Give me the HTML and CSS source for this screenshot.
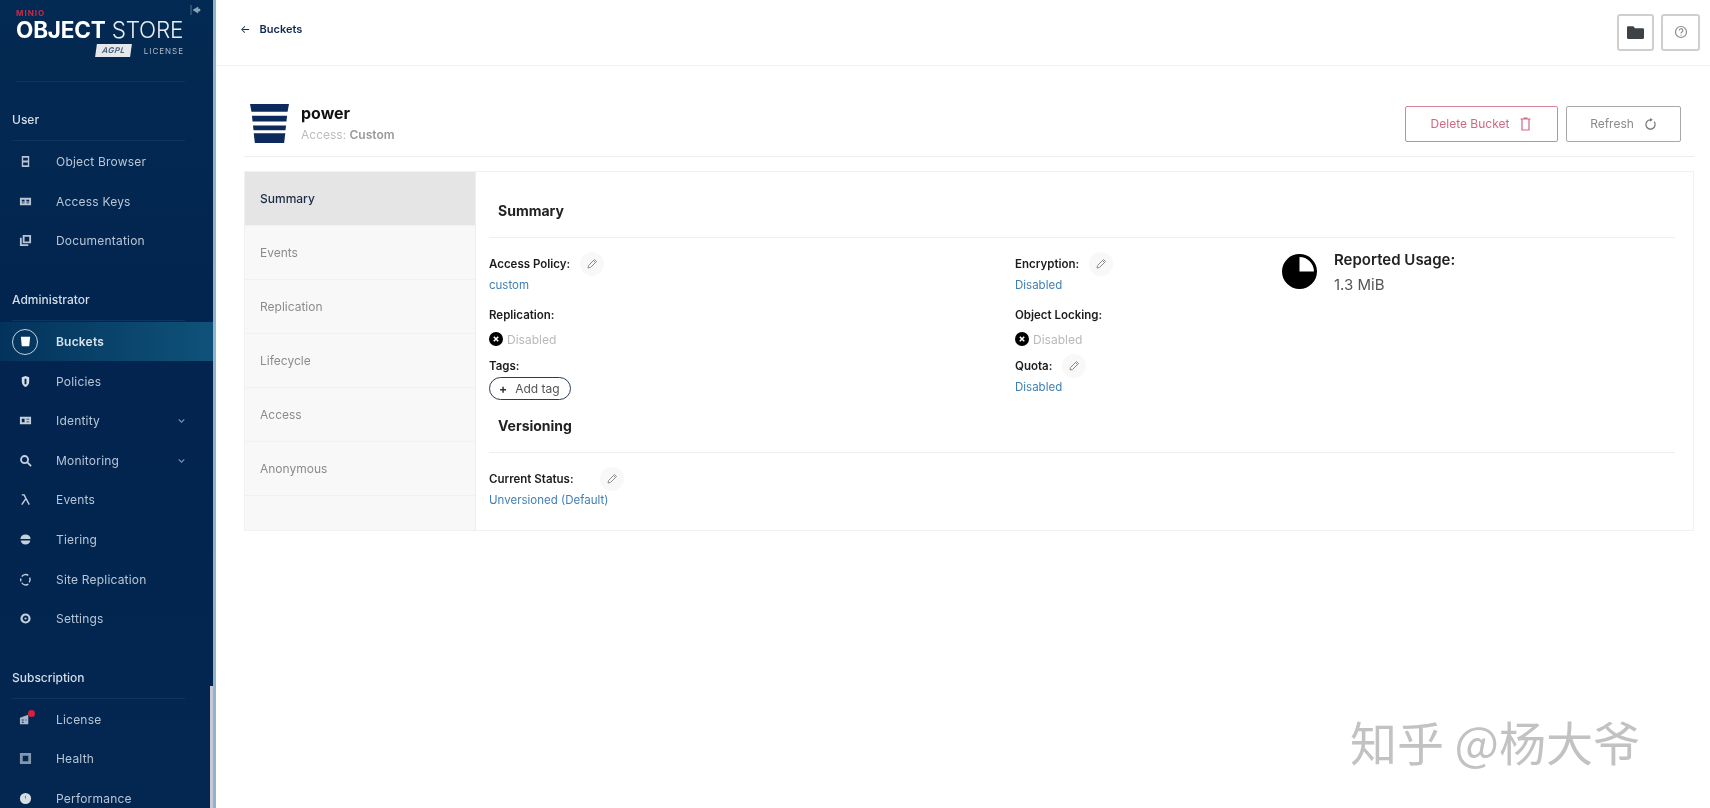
FILE: index.html
```html
<!DOCTYPE html>
<html lang="en">
<head>
<meta charset="utf-8">
<title>MinIO Object Store - power</title>
<link rel="stylesheet" href="styles.css">
</head>
<body>
<div class="app">
  <aside class="sidebar">
    <div class="brand">
      <svg class="collapse" viewBox="0 0 12 12"><path d="M2 1v10M4 6l5-3v2h2v2H9v2z" fill="#8fa3b8" stroke="#8fa3b8" stroke-width=".6"/></svg>
      <div class="brand-min">MINIO</div>
      <div class="brand-name"><b>OBJECT</b> STORE</div>
      <div class="brand-lic"><span class="agpl">AGPL</span><span>LICENSE</span></div>
    </div>
    <div class="brand-rule"></div>

    <div class="group-title first">User</div>
    <nav class="group">
      <a class="item"><svg class="ico" viewBox="0 0 14 14"><path d="M3 1h8v12H3zM4.5 3v3h5V3zM4.5 8v3h5V8z" fill="#b6c4d4" fill-rule="evenodd"/></svg><span>Object Browser</span></a>
      <a class="item"><svg class="ico" viewBox="0 0 14 14"><path d="M1 3h12v8H1zM3 5v2h3V5zM8 5v2h3V5zM3 8v1h3V8zM8 8v1h3V8z" fill="#b6c4d4" fill-rule="evenodd"/></svg><span>Access Keys</span></a>
      <a class="item"><svg class="ico" viewBox="0 0 14 14"><path d="M4 1h9v9H4zM1 4h2v7h7v2H1zM6 3v5h5V3z" fill="#b6c4d4" fill-rule="evenodd"/></svg><span>Documentation</span></a>
    </nav>

    <div class="group-title">Administrator</div>
    <nav class="group">
      <a class="item active"><span class="ring"><svg viewBox="0 0 14 14"><path d="M2 2h10l-1 10H3z" fill="#fff"/></svg></span><span>Buckets</span></a>
      <a class="item"><svg class="ico" viewBox="0 0 14 14"><path d="M7 1l4 1.5V7c0 3-2 5-4 6-2-1-4-3-4-6V2.500zM6 4v6h2V4z" fill="#d5dde6" fill-rule="evenodd"/></svg><span>Policies</span></a>
      <a class="item"><svg class="ico" viewBox="0 0 14 14"><path d="M1 3h12v8H1zM3 5v4h3V5zM8 5v1h3V5zM8 8v1h3V8z" fill="#c4d0dc" fill-rule="evenodd"/></svg><span>Identity</span><svg class="chev" viewBox="0 0 8 8"><path d="M1.500 3L4 5.500 6.500 3" fill="none" stroke="#7f95ac" stroke-width="1"/></svg></a>
      <a class="item"><svg class="ico" viewBox="0 0 14 14"><circle cx="6" cy="6" r="3.800" fill="none" stroke="#c4d0dc" stroke-width="2"/><path d="M9 9l4 4" stroke="#c4d0dc" stroke-width="2"/></svg><span>Monitoring</span><svg class="chev" viewBox="0 0 8 8"><path d="M1.500 3L4 5.500 6.500 3" fill="none" stroke="#7f95ac" stroke-width="1"/></svg></a>
      <a class="item"><svg class="ico" viewBox="0 0 14 14"><path d="M3 2h2.500L11 12.500M7 6.500L3 12.500" fill="none" stroke="#c4d0dc" stroke-width="1.500"/></svg><span>Events</span></a>
      <a class="item"><svg class="ico" viewBox="0 0 14 14"><path d="M7 1.500a5.500 5.500 0 0 1 5.500 5H1.500a5.500 5.500 0 0 1 5.500-5zM1.800 8h10.400A5.500 5.500 0 0 1 7 12.500 5.500 5.500 0 0 1 1.800 8z" fill="#c4d0dc"/></svg><span>Tiering</span></a>
      <a class="item"><svg class="ico" viewBox="0 0 14 14"><path d="M3 4a5 5 0 0 1 7-1.500M11.500 5a5 5 0 0 1-.5 5M10 12a5 5 0 0 1-7-1.500M2 9a5 5 0 0 1 0-3" fill="none" stroke="#c4d0dc" stroke-width="1.500"/></svg><span>Site Replication</span></a>
      <a class="item"><svg class="ico" viewBox="0 0 14 14"><circle cx="7" cy="7" r="4.300" fill="none" stroke="#c4d0dc" stroke-width="2.400"/><circle cx="7" cy="7" r="1.200" fill="#c4d0dc"/></svg><span>Settings</span></a>
    </nav>

    <div class="group-title">Subscription</div>
    <nav class="group">
      <a class="item"><span class="badged"><svg class="ico" viewBox="0 0 14 14"><path d="M1 5l9-3v10H1zM3 7v1h2V7zM3 9.500v1h2v-1zM7 7v1h1V7z" fill="#a9b9ca" fill-rule="evenodd"/></svg><i class="dot"></i></span><span>License</span></a>
      <a class="item"><svg class="ico" viewBox="0 0 14 14"><path d="M1 1h12v12H1zM4 4v6h6V4z" fill="#8296ad" fill-rule="evenodd"/></svg><span>Health</span></a>
      <a class="item"><svg class="ico" viewBox="0 0 14 14"><circle cx="7" cy="7" r="6" fill="#d5dde6"/><path d="M7 4v3" stroke="#5f7690" stroke-width="1"/></svg><span>Performance</span></a>
    </nav>
    <div class="rail-end"></div>
  </aside>

  <main class="main">
    <header class="topbar">
      <a class="back"><span class="arrow">←</span><span>Buckets</span></a>
      <div class="top-actions">
        <button class="square wide"><svg viewBox="0 0 16 14"><path d="M0 2a1 1 0 0 1 1-1h5l1.500 2H15a1 1 0 0 1 1 1v8a1 1 0 0 1-1 1H1a1 1 0 0 1-1-1z" fill="#3d4247"/></svg></button>
        <button class="square"><svg viewBox="0 0 14 14"><circle cx="7" cy="7" r="5.500" fill="none" stroke="#8b8b8b" stroke-width="1.200"/><path d="M5.300 5.500a1.800 1.800 0 1 1 2.600 1.600c-.6.300-.9.700-.9 1.400M7 9.800v1" fill="none" stroke="#8b8b8b" stroke-width="1.100"/></svg></button>
      </div>
    </header>

    <section class="page">
      <div class="bucket-head">
        <svg class="bucket-ico" viewBox="0 0 40 40"><path d="M0 0h40l-1.500 8H1.500z" fill="#0d2a5c"/><path d="M1.500 8h37v4H1.500z" fill="#fff" opacity="0"/><path d="M2 12h36l-.6 6H2.600z" fill="#0d2a5c"/><path d="M3 22h34l-.6 5H3.600z" fill="#0d2a5c"/><path d="M3.800 30h32.400L35 40H5z" fill="#0d2a5c"/></svg>
        <div class="bucket-info">
          <h1 class="bucket-name">power</h1>
          <div class="bucket-access">Access: <b>Custom</b></div>
        </div>
        <div class="head-actions">
          <button class="btn danger">Delete Bucket<svg viewBox="0 0 12 14"><path d="M1 2h10M2.500 2v11h7V2M4 1h4" fill="none" stroke="#cf6a82" stroke-width="1.200"/></svg></button>
          <button class="btn plain">Refresh<svg viewBox="0 0 14 14"><path d="M11 4.500A5 5 0 1 1 7 2.500" fill="none" stroke="#777" stroke-width="1.400"/><path d="M6.500 .5v4l3-2z" fill="#777"/></svg></button>
        </div>
      </div>

      <div class="panel">
        <ul class="tabs">
          <li class="tab current">Summary</li>
          <li class="tab">Events</li>
          <li class="tab">Replication</li>
          <li class="tab">Lifecycle</li>
          <li class="tab">Access</li>
          <li class="tab">Anonymous</li>
        </ul>
        <div class="content">
          <h2 class="section-title">Summary</h2>
          <div class="summary">
            <div class="col one">
              <div class="field">
                <div class="label">Access Policy:<span class="edit"><svg viewBox="0 0 12 12"><path d="M2 10l.6-2.600L8.500 1.500l2 2-5.900 5.900zM7.500 2.500l2 2" fill="none" stroke="#8d8d8d" stroke-width="1"/></svg></span></div>
                <div class="value">custom</div>
              </div>
              <div class="field">
                <div class="label">Replication:</div>
                <div class="status"><svg viewBox="0 0 14 14"><circle cx="7" cy="7" r="7" fill="#000"/><path d="M4.800 4.800l4.400 4.400M9.200 4.800L4.800 9.200" stroke="#fff" stroke-width="1.600"/></svg>Disabled</div>
              </div>
              <div class="field">
                <div class="label">Tags:</div>
                <div class="pill"><span class="plus">+</span>Add tag</div>
              </div>
            </div>
            <div class="col two">
              <div class="field">
                <div class="label">Encryption:<span class="edit"><svg viewBox="0 0 12 12"><path d="M2 10l.6-2.600L8.500 1.500l2 2-5.900 5.900zM7.500 2.500l2 2" fill="none" stroke="#8d8d8d" stroke-width="1"/></svg></span></div>
                <div class="value">Disabled</div>
              </div>
              <div class="field">
                <div class="label">Object Locking:</div>
                <div class="status"><svg viewBox="0 0 14 14"><circle cx="7" cy="7" r="7" fill="#000"/><path d="M4.800 4.800l4.400 4.400M9.200 4.800L4.800 9.200" stroke="#fff" stroke-width="1.600"/></svg>Disabled</div>
              </div>
              <div class="field">
                <div class="label">Quota:<span class="edit"><svg viewBox="0 0 12 12"><path d="M2 10l.6-2.600L8.500 1.500l2 2-5.900 5.900zM7.500 2.500l2 2" fill="none" stroke="#8d8d8d" stroke-width="1"/></svg></span></div>
                <div class="value">Disabled</div>
              </div>
            </div>
            <div class="usage">
              <svg viewBox="0 0 34 34"><path fill-rule="evenodd" d="M17 0a17 17 0 1 1 0 34 17 17 0 0 1 0-34zM17 3v14h14A14 14 0 0 0 17 3z" fill="#000"/></svg>
              <div>
                <div class="usage-title">Reported Usage:</div>
                <div class="usage-value">1.3 MiB</div>
              </div>
            </div>
          </div>
          <h2 class="section-title versioning">Versioning</h2>
          <div class="field status-field">
            <div class="label">Current Status:<span class="edit far"><svg viewBox="0 0 12 12"><path d="M2 10l.6-2.600L8.500 1.500l2 2-5.900 5.900zM7.500 2.500l2 2" fill="none" stroke="#8d8d8d" stroke-width="1"/></svg></span></div>
            <div class="value">Unversioned (Default)</div>
          </div>
        </div>
      </div>
    </section>
  </main>
</div>
<div class="watermark">知乎 @杨大爷</div>
</body>
</html>
```

FILE: styles.css
```css
* { box-sizing: border-box; }
html, body { margin: 0; height: 100%; overflow: hidden; background: #fff; }
body { font-family: Inter, "Liberation Sans", sans-serif; color: #000; filter: blur(.55px); }
h1, h2, ul { margin: 0; padding: 0; }
button { font-family: inherit; background: #fff; cursor: pointer; }

.app { display: flex; height: 808px; }

/* sidebar */
.sidebar {
  position: relative;
  flex: 0 0 216px;
  height: 808px;
  overflow: hidden;
  background: linear-gradient(180deg, #032a52 0%, #02244f 45%, #032750 100%);
  border-right: 3px solid #8fb4cd;
  color: #b9c6d6;
  font-size: 12px;
}
.rail-end {
  position: absolute;
  right: -3px; bottom: 0;
  width: 6px; height: 122px;
  background: linear-gradient(90deg, #c9c9d6 0 50%, #fff 50%);
}
.brand { position: relative; height: 74px; padding: 8px 0 0 16px; }
.collapse { position: absolute; top: 4px; left: 189px; width: 12px; height: 12px; }
.brand-min { font-size: 8px; line-height: 10px; font-weight: 700; letter-spacing: 1px; color: #c72c48; }
.brand-name { font-size: 22.500px; line-height: 24px; font-weight: 300; color: #e8edf2; margin-top: 0; white-space: nowrap; letter-spacing: -.2px; }
.brand-name b { font-weight: 700; color: #fff; }
.brand-lic { display: flex; align-items: center; justify-content: flex-end; gap: 12px; width: 168px; margin-top: 2px; font-size: 8px; letter-spacing: 1px; color: #aebccb; }
.agpl { background: #e4e8ec; color: #56647a; padding: 2px 6px; font-weight: 700; font-style: italic; letter-spacing: .5px; line-height: 9px; transform: skewX(-8deg); }
.brand-rule { margin: 7px 28px 0 16px; height: 1px; background: #0d3560; }
.group-title {
  margin: 31px 28px 0 12px;
  padding-bottom: 12px;
  height: 29px;
  color: #d5dde6;
  font-size: 12px;
  line-height: 16px;
  font-weight: 500;
  border-bottom: 1px solid #0d3560;
}
.group-title.first { margin-top: 30px; }
.group { display: flex; flex-direction: column; padding-top: 1px; }
.item { display: flex; align-items: center; height: 39.600px; padding-left: 19px; position: relative; letter-spacing: .2px; }
.item > span:last-of-type, .item > span:last-child { white-space: nowrap; }
.ico { flex: none; width: 13px; height: 13px; margin-right: 24px; }
.item.active {
  background: linear-gradient(90deg, #03335c 0%, #0f5279 100%);
  color: #d8e2ec;
  font-weight: 600;
  padding-left: 12px;
}
.ring { flex: none; display: flex; align-items: center; justify-content: center; width: 26px; height: 26px; margin-right: 18px; border: 1.500px solid #c3d1de; border-radius: 50%; }
.ring svg { width: 13px; height: 13px; }
.chev { position: absolute; left: 177px; width: 9px; height: 9px; }
.badged { position: relative; display: flex; }
.dot { position: absolute; left: 9px; top: -3px; width: 7px; height: 7px; border-radius: 50%; background: #d5203f; }

/* main */
.main { flex: 1; min-width: 0; }
.topbar { display: flex; align-items: center; justify-content: space-between; height: 66px; padding: 0 10px 7px 24px; border-bottom: 1px solid #f2f2f2; }
.back { display: flex; align-items: center; gap: 9px; font-size: 11px; font-weight: 600; color: #0f2a50; }
.arrow { font-size: 11px; font-weight: 400; }
.top-actions { display: flex; gap: 7px; margin-top: 6px; }
.square { display: flex; align-items: center; justify-content: center; width: 39px; height: 37px; padding: 0; border: 2px solid #cfcfcf; border-radius: 3px; }
.square.wide { width: 37px; }
.square svg { width: 14px; height: 14px; }
.square.wide svg { width: 17px; height: 15px; }

.page { padding: 38px 16px 0 28px; }
.bucket-head { display: flex; align-items: center; height: 53px; margin-right: 0; padding: 0 13px 14px 6px; border-bottom: 1px solid #eee; }
.bucket-ico { flex: none; width: 39px; height: 39px; margin-right: 12px; }
.bucket-name { font-size: 16px; line-height: 20px; font-weight: 700; color: #111; }
.bucket-access { font-size: 12px; line-height: 16px; margin-top: 4px; color: #bdbdbd; }
.bucket-access b { font-weight: 600; color: #9a9a9a; }
.head-actions { display: flex; gap: 8px; margin-left: auto; margin-top: 1px; }
.btn { display: flex; align-items: center; justify-content: center; gap: 10px; height: 36px; padding: 0; font-size: 12px; border-radius: 2px; border: 1px solid; }
.btn svg { width: 13px; height: 14px; }
.btn.danger { width: 153px; color: #cf6a82; border-color: #d98398; }
.btn.plain { width: 115px; color: #8a8a8a; border-color: #a8a8a8; }

.panel { display: flex; margin-top: 14px; width: 1450px; height: 360px; border: 1px solid #f1f1f1; }
.tabs { flex: 0 0 231px; list-style: none; background: #f8f8f8; border-right: 1px solid #eee; }
.tab { display: flex; align-items: center; height: 54px; padding-left: 15px; font-size: 12px; color: #8c8c8c; border-bottom: 1px solid #f1f1f1; }
.tab.current { background: #e5e5e5; color: #1d2c44; font-weight: 500; }
.content { flex: 1; padding: 30px 18px 0 13px; }
.section-title { font-size: 14px; line-height: 18px; font-weight: 700; color: #222; padding: 0 0 17px 9px; border-bottom: 1px solid #eee; }
.section-title.versioning { margin-top: 10px; }
.summary { display: flex; padding-top: 15px; }
.col.one { flex: 0 0 526px; }
.col.two { flex: 0 0 267px; }
.field { min-height: 52px; }
.field + .field { margin-top: -1px; }
.label { display: flex; align-items: center; height: 22px; font-size: 11.500px; font-weight: 600; color: #1c1c1c; }
.edit { display: flex; align-items: center; justify-content: center; width: 24px; height: 24px; margin-left: 10px; border-radius: 50%; background: #f8f8f8; }
.edit.far { margin-left: 26px; }
.edit svg { width: 12px; height: 12px; }
.value { font-size: 11.500px; line-height: 20px; color: #3f7fb5; }
.status { display: flex; align-items: center; gap: 4px; height: 26px; font-size: 12px; color: #b9b9b9; }
.status svg { width: 14px; height: 14px; }
.pill { display: inline-flex; align-items: center; gap: 8px; height: 23px; width: 82px; padding-left: 9px; font-size: 12px; color: #555; border: 1.500px solid #2a3b52; border-radius: 12px; }
.plus { font-weight: 700; color: #333; }
.usage { display: flex; align-items: flex-start; gap: 17px; margin-top: -4px; }
.usage svg { width: 35px; height: 35px; margin-top: 5px; }
.usage-title { font-size: 15px; line-height: 22px; font-weight: 600; color: #222; }
.usage-value { font-size: 15px; line-height: 22px; margin-top: 3px; color: #555; }
.status-field { padding-top: 15px; }

.watermark {
  position: fixed;
  left: 1350px; top: 711px;
  font-family: "Noto Sans CJK SC", sans-serif;
  font-size: 47px;
  line-height: 60px;
  color: #c2c2c2;
  white-space: nowrap;
}
```
